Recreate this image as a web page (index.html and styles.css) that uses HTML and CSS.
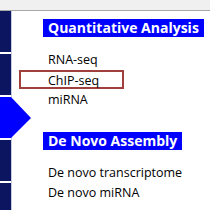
FILE: index.html
```html
<!DOCTYPE html>
<html lang="en">
<head>
  <meta charset="UTF-8" />
  <title>Pipelines</title>
  <link rel="stylesheet" href="styles.css">
</head>
<body>
  <div class="top-bar"></div>
  <div class="main">
    <div class="side-nav">
      <div class="nav-item"></div>
      <div class="nav-item"></div>
      <div class="nav-item active"></div>
      <div class="nav-item"></div>
      <div class="nav-item"></div>
    </div>
    <div class="content">
      <div class="group">
        <div class="group-title">Quantitative Analysis</div>
        <div class="group-item">RNA-seq</div>
        <div class="group-item selected">ChIP-seq</div>
        <div class="group-item">miRNA</div>
      </div>
      <div class="group">
        <div class="group-title">De Novo Assembly</div>
        <div class="group-item">De novo transcriptome</div>
        <div class="group-item">De novo miRNA</div>
      </div>
    </div>
  </div>
</body>
</html>
```

FILE: styles.css
```css
body {
  margin: 0;
  padding: 0;
  font-family: 'Open Sans', 'DejaVu Sans', sans-serif;
  background: #fff;
  color: #000;
  width: 210px;
  height: 210px;
  overflow: hidden;
}

.top-bar {
  height: 10px;
  background: #f0f0f0;
  border-bottom: 1px solid #a8a8a8;
}

.main {
  display: flex;
  height: 199px;
  overflow: hidden;
}

.side-nav {
  width: 11px;
  border-right: 1px solid #c8cce0;
  flex-shrink: 0;
}

.nav-item {
  height: 41px;
  background: #0c1660;
  border-bottom: 2px solid #fff;
  position: relative;
}

.nav-item.active {
  background: #0000ff;
}

/* arrow pointing at the open panel */
.nav-item.active::after {
  content: '';
  position: absolute;
  left: 11px;
  top: 0;
  border-left: 20px solid #0000ff;
  border-top: 21px solid transparent;
  border-bottom: 20px solid transparent;
}

.content {
  padding: 8px 0 0 31px;
  flex: 1;
}

.group {
  margin-bottom: 22px;
}

.group-title {
  width: fit-content;
  background: #0000ff;
  color: #fff;
  font-weight: bold;
  font-size: 14px;
  line-height: 18px;
  padding: 0 5px;
  margin-bottom: 13px;
}

.group-item {
  font-size: 12.5px;
  line-height: 20px;
  height: 20px;
  padding-left: 5px;
}

.group-item.selected {
  box-sizing: border-box;
  width: 105px;
  margin-left: -24px;
  padding-left: 27px;
  line-height: 17px;
  height: 19px;
  margin-bottom: 1px;
  border: 2px solid #a0403c;
}
```
